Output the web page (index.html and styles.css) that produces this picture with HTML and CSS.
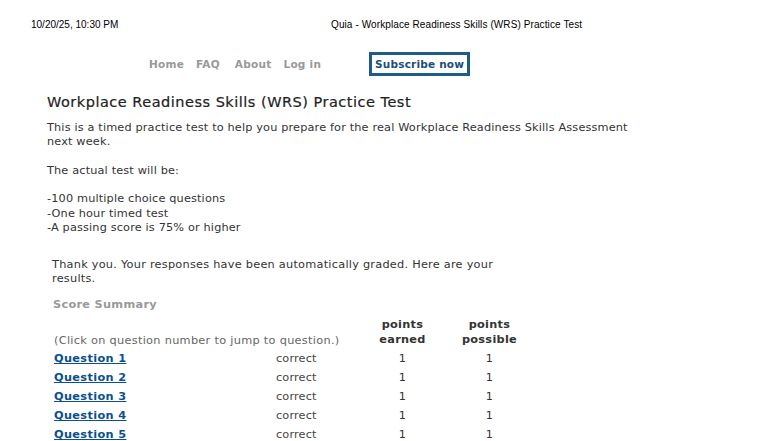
FILE: index.html
```html
<!DOCTYPE html>
<html>
<head>
<meta charset="utf-8">
<link rel="stylesheet" href="styles.css">
</head>
<body>
<div class="printhead">
  <span class="date">10/20/25, 10:30 PM</span>
  <span class="doctitle">Quia - Workplace Readiness Skills (WRS) Practice Test</span>
</div>
<div class="nav">
  <a class="navlink">Home</a>
  <a class="navlink">FAQ</a>
  <a class="navlink">About</a>
  <a class="navlink">Log in</a>
  <a class="subscribe">Subscribe now</a>
</div>
<div class="content">
  <h1 class="title">Workplace Readiness Skills (WRS) Practice Test</h1>
  <p class="intro">This is a timed practice test to help you prepare for the real Workplace Readiness Skills Assessment next week.<br><br>The actual test will be:<br><br>-100 multiple choice questions<br>-One hour timed test<br>-A passing score is 75% or higher</p>
  <div class="results">
    <p class="thanks">Thank you. Your responses have been automatically graded. Here are your results.</p>
    <div class="summary">Score Summary</div>
    <table class="scores">
      <tr class="head">
        <td class="hint">(Click on question number to jump to question.)</td>
        <td class="num hd">points<br>earned</td>
        <td class="num hd">points<br>possible</td>
      </tr>
      <tr><td class="q"><a>Question 1</a><span class="res">correct</span></td><td class="num">1</td><td class="num">1</td></tr>
      <tr><td class="q"><a>Question 2</a><span class="res">correct</span></td><td class="num">1</td><td class="num">1</td></tr>
      <tr><td class="q"><a>Question 3</a><span class="res">correct</span></td><td class="num">1</td><td class="num">1</td></tr>
      <tr><td class="q"><a>Question 4</a><span class="res">correct</span></td><td class="num">1</td><td class="num">1</td></tr>
      <tr><td class="q"><a>Question 5</a><span class="res">correct</span></td><td class="num">1</td><td class="num">1</td></tr>
    </table>
  </div>
</div>
</body>
</html>
```
FILE: styles.css
```css
html, body {
  margin: 0;
  padding: 0;
  background: #fff;
}
body {
  font-family: "DejaVu Sans", Verdana, sans-serif;
  color: #333;
  overflow: hidden;
}
.printhead {
  display: flex;
  font-family: "Liberation Sans", Arial, sans-serif;
  font-size: 10px;
  color: #000;
  padding: 19px 0 0 31px;
  height: 12px;
  line-height: 12px;
}
.printhead .date {
  width: 300px;
}
.printhead .doctitle {
  letter-spacing: 0.1px;
}
.nav {
  display: flex;
  align-items: center;
  margin-top: 21px;
  padding-left: 149px;
  height: 24px;
}
.navlink {
  font-size: 10.5px;
  font-weight: bold;
  color: #999;
  margin-right: 12px;
  letter-spacing: 0.25px;
}
.navlink:nth-child(2) {
  margin-right: 15px;
}
.subscribe {
  margin-left: 36px;
  border: 3px solid #1f5c85;
  padding: 3px 0;
  font-size: 10.5px;
  font-weight: bold;
  color: #1a4f7a;
  letter-spacing: 0.2px;
  white-space: nowrap;
  box-sizing: border-box;
  width: 101px;
  text-align: center;
}
.content {
  padding-left: 47px;
}
.title {
  font-size: 14.5px;
  font-weight: normal;
  color: #222;
  margin: 17px 0 0 0;
  line-height: 18px;
  letter-spacing: 0.5px;
  -webkit-text-stroke: 0.2px #222;
}
.intro {
  font-size: 11.3px;
  line-height: 14.3px;
  margin: 10px 0 0 0;
  width: 600px;
  letter-spacing: 0.15px;
}
.results {
  padding-left: 5px;
  margin-top: 23px;
}
.thanks {
  font-size: 11.3px;
  line-height: 13.5px;
  margin: 0;
  width: 470px;
  letter-spacing: 0.25px;
}
.summary {
  font-size: 11.3px;
  font-weight: bold;
  color: #999;
  margin-top: 13px;
  padding-left: 1px;
  letter-spacing: 0.3px;
}
.scores {
  border-collapse: collapse;
  margin-top: 0;
  font-size: 11.3px;
  letter-spacing: 0.15px;
}
.scores td {
  padding: 0;
  height: 19px;
  vertical-align: middle;
}
.hint {
  color: #666;
  width: 305px;
  padding-left: 2px !important;
  padding-bottom: 2px !important;
  vertical-align: bottom !important;
  letter-spacing: 0.3px;
  white-space: nowrap;
}
.hd {
  font-weight: bold;
  line-height: 15px;
  height: 36px !important;
  padding-bottom: 2px !important;
  vertical-align: bottom !important;
  letter-spacing: 0.3px;
}
.num {
  text-align: center;
  width: 87px;
}
.q {
  display: flex;
  align-items: center;
  padding-left: 2px !important;
}
.q a {
  color: #0a4f8f;
  font-weight: bold;
  text-decoration: underline;
  width: 222px;
  letter-spacing: 0.35px;
}
.res {
  color: #444;
}
```
